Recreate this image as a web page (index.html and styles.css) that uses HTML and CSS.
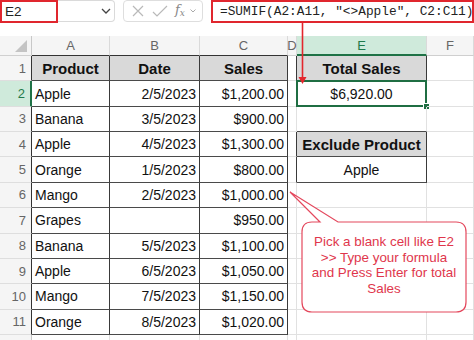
FILE: index.html
```html
<!DOCTYPE html>
<html>
<head>
<meta charset="utf-8">
<link rel="stylesheet" href="styles.css">
</head>
<body>
<div class="page">
  <div class="fbar">
    <div class="namebox">
      <div class="name">E2</div>
      <div class="dd">
        <svg width="10" height="6" viewBox="0 0 10 6"><polyline points="1,1 5,5 9,1" fill="none" stroke="#444" stroke-width="1.3"/></svg>
      </div>
    </div>
    <div class="fxbox">
      <svg class="ico" width="14" height="14" viewBox="0 0 14 14"><path d="M2 2 L12 12 M12 2 L2 12" stroke="#b9b9b9" stroke-width="1.2" fill="none"/></svg>
      <svg class="ico" width="16" height="14" viewBox="0 0 16 14"><polyline points="1,8 5,12 15,2" stroke="#b9b9b9" stroke-width="1.2" fill="none"/></svg>
      <span class="fx">f<sub>x</sub></span>
      <svg class="ico small" width="6" height="4" viewBox="0 0 6 4"><polyline points="0.5,0.5 3,3 5.5,0.5" fill="none" stroke="#aaa" stroke-width="1"/></svg>
    </div>
    <div class="formula">=SUMIF(A2:A11, "&lt;&gt;Apple", C2:C11)</div>
  </div>

  <div class="sheet">
    <div class="c corner"><svg width="12" height="12" viewBox="0 0 12 12"><polygon points="12,0 12,12 0,12" fill="#c4c4c4"/></svg></div>
    <div class="c ch tb">A</div>
    <div class="c ch tb">B</div>
    <div class="c ch tb">C</div>
    <div class="c ch">D</div>
    <div class="c ch sel">E</div>
    <div class="c ch">F</div>

    <div class="c rh">1</div>
    <div class="c t th">Product</div>
    <div class="c t th">Date</div>
    <div class="c t th">Sales</div>
    <div class="c tl"></div>
    <div class="c t th">Total Sales</div>
    <div class="c"></div>

    <div class="c rh rsel">2</div>
    <div class="c t">Apple</div>
    <div class="c t r">2/5/2023</div>
    <div class="c t r">$1,200.00</div>
    <div class="c tl"></div>
    <div class="c t ctr active">$6,920.00</div>
    <div class="c"></div>

    <div class="c rh">3</div>
    <div class="c t">Banana</div>
    <div class="c t r">3/5/2023</div>
    <div class="c t r">$900.00</div>
    <div class="c"></div>
    <div class="c tbot"></div>
    <div class="c"></div>

    <div class="c rh">4</div>
    <div class="c t">Apple</div>
    <div class="c t r">4/5/2023</div>
    <div class="c t r">$1,300.00</div>
    <div class="c tl"></div>
    <div class="c t th">Exclude Product</div>
    <div class="c"></div>

    <div class="c rh">5</div>
    <div class="c t">Orange</div>
    <div class="c t r">1/5/2023</div>
    <div class="c t r">$800.00</div>
    <div class="c tl"></div>
    <div class="c t ctr">Apple</div>
    <div class="c"></div>

    <div class="c rh">6</div>
    <div class="c t">Mango</div>
    <div class="c t r">2/5/2023</div>
    <div class="c t r">$1,000.00</div>
    <div class="c"></div>
    <div class="c"></div>
    <div class="c"></div>

    <div class="c rh">7</div>
    <div class="c t">Grapes</div>
    <div class="c t r"></div>
    <div class="c t r">$950.00</div>
    <div class="c"></div>
    <div class="c"></div>
    <div class="c"></div>

    <div class="c rh">8</div>
    <div class="c t">Banana</div>
    <div class="c t r">5/5/2023</div>
    <div class="c t r">$1,100.00</div>
    <div class="c"></div>
    <div class="c"></div>
    <div class="c"></div>

    <div class="c rh">9</div>
    <div class="c t">Apple</div>
    <div class="c t r">6/5/2023</div>
    <div class="c t r">$1,050.00</div>
    <div class="c"></div>
    <div class="c"></div>
    <div class="c"></div>

    <div class="c rh">10</div>
    <div class="c t">Mango</div>
    <div class="c t r">7/5/2023</div>
    <div class="c t r">$1,150.00</div>
    <div class="c"></div>
    <div class="c"></div>
    <div class="c"></div>

    <div class="c rh">11</div>
    <div class="c t">Orange</div>
    <div class="c t r">8/5/2023</div>
    <div class="c t r">$1,020.00</div>
    <div class="c"></div>
    <div class="c"></div>
    <div class="c"></div>

    <div class="c rh last"></div>
    <div class="c"></div>
    <div class="c"></div>
    <div class="c"></div>
    <div class="c"></div>
    <div class="c"></div>
    <div class="c"></div>
  </div>

  <svg class="overlay" width="474" height="340" viewBox="0 0 474 340">
    <line x1="302.5" y1="23" x2="302.5" y2="78" stroke="#e3262d" stroke-width="1.6"/>
    <polygon points="298.5,77 306.5,77 302.5,84" fill="#e3262d"/>
    <path d="M312 222 H320 L290 192 L338 222 H456 Q466 222 466 232 V302 Q466 312 456 312 H312 Q302 312 302 302 V232 Q302 222 312 222 Z" fill="#fff" stroke="#e4485d" stroke-width="1.2"/>
  </svg>
  <div class="callout-text">Pick a blank cell like E2<br>&gt;&gt; Type your formula<br>and Press Enter for total<br>Sales</div>
</div>
</body>
</html>
```
FILE: styles.css
```css
html, body {
  margin: 0;
  padding: 0;
  background: #fff;
}
.page {
  position: relative;
  width: 474px;
  height: 340px;
  overflow: hidden;
  font-family: "Liberation Sans", Arial, sans-serif;
}
.fbar {
  display: flex;
  height: 23px;
  gap: 8px;
}
.namebox {
  display: flex;
  width: 115px;
}
.name {
  box-sizing: border-box;
  width: 58px;
  height: 23px;
  border: 2px solid #e0262e;
  padding-left: 3px;
  font-size: 13.5px;
  line-height: 19px;
  color: #222;
}
.dd {
  flex: 1;
  box-sizing: border-box;
  height: 22px;
  border: 1px solid #dadada;
  border-left: none;
  border-radius: 0 4px 4px 0;
  display: flex;
  align-items: center;
  justify-content: flex-end;
  padding-right: 3px;
}
.fxbox {
  box-sizing: border-box;
  width: 80px;
  height: 22px;
  border: 1px solid #dedede;
  border-radius: 4px;
  display: flex;
  align-items: center;
  padding-left: 7px;
  gap: 7px;
}
.fx {
  font-family: "DejaVu Serif", "Liberation Serif", serif;
  font-style: italic;
  color: #888;
  font-size: 13px;
  line-height: 14px;
}
.fx sub {
  font-size: 9px;
  vertical-align: -2px;
}
.ico.small {
  margin-left: -2px;
}
.formula {
  flex: 1;
  box-sizing: border-box;
  height: 23px;
  border: 2px solid #e0262e;
  padding-left: 7px;
  font-family: "Liberation Mono", "DejaVu Sans Mono", monospace;
  font-size: 12.8px;
  line-height: 19px;
  color: #222;
  white-space: nowrap;
  overflow: hidden;
}
.sheet {
  margin-top: 13px;
  display: grid;
  grid-template-columns: 32px 78px 90px 88px 9px 130px 1fr;
  grid-template-rows: 20px repeat(12, 25.36px);
}
.c {
  box-sizing: border-box;
  border-right: 1px solid #e1e1e1;
  border-bottom: 1px solid #e1e1e1;
  display: flex;
  align-items: center;
  padding: 0 3px;
  font-size: 14px;
  color: #111;
  white-space: nowrap;
  position: relative;
}
.corner {
  background: #f5f5f5;
  border-right: 1px solid #c8c8c8;
  border-bottom: 1px solid #d0d0d0;
  justify-content: flex-end;
  align-items: flex-end;
  padding: 0 4px 3px 0;
}
.ch {
  background: #f5f5f5;
  color: #666;
  font-size: 13px;
  justify-content: center;
  padding: 0;
  border-right: 1px solid #dadada;
  border-bottom: 1px solid #cfcfcf;
}
.ch.tb {
  border-bottom: 1px solid #333;
}
.ch.sel {
  background: #cfeadb;
  color: #1f7a4b;
  border-bottom: 2px solid #1f7246;
}
.rh {
  background: #f5f5f5;
  color: #666;
  font-size: 13px;
  justify-content: flex-end;
  padding: 0 5px 0 0;
  border-right: 1px solid #333;
  border-bottom: 1px solid #dedede;
}
.rh.last {
  border-right: 1px solid #c8c8c8;
}
.rh.rsel {
  background: #cfeadb;
  color: #1f7a4b;
  border-right: 2px solid #1f7246;
}
.t {
  border-right: 1px solid #3a3a3a;
  border-bottom: 1.5px solid #4a4a4a;
}
.th {
  background: #d9d9d9;
  font-weight: bold;
  font-size: 15px;
  justify-content: center;
}
.tl {
  border-right: 1px solid #3a3a3a;
}
.tbot {
  border-bottom: 1.5px solid #4a4a4a;
}
.r {
  justify-content: flex-end;
}
.ctr {
  justify-content: center;
}
.active::before {
  content: "";
  position: absolute;
  top: -1px;
  left: -1px;
  right: -1px;
  bottom: -1px;
  border: 2px solid #1f6e43;
}
.active::after {
  content: "";
  position: absolute;
  right: -4px;
  bottom: -4px;
  width: 5px;
  height: 5px;
  background: #1f6e43;
  border: 1px solid #fff;
}
.overlay {
  position: absolute;
  top: 0;
  left: 0;
  pointer-events: none;
}
.callout-text {
  position: absolute;
  left: 302px;
  top: 234px;
  width: 164px;
  text-align: center;
  font-size: 13.4px;
  line-height: 15.5px;
  color: #e0364c;
}
```
